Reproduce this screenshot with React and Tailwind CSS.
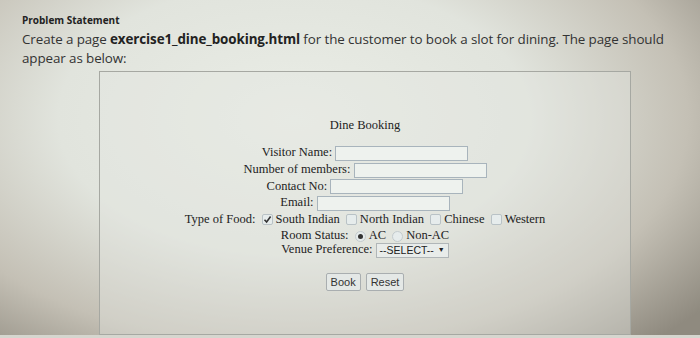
import React from 'react';

const serif = { fontFamily: '"Liberation Serif", "Times New Roman", serif' };

const TextBox = ({ w = 'w-[133px]' }) => (
  <span className={`inline-block ${w} h-[15px] border border-[#a8b4bc] bg-[#eef2ee] align-middle`} />
);

const Check = ({ checked }) => (
  <span className="inline-flex w-[11px] h-[11px] items-center justify-center border border-[#b9c2c6] bg-[#e6ecec] rounded-[2px] align-middle mx-[3px]">
    {checked && (
      <svg width="9" height="9" viewBox="0 0 9 9">
        <path d="M1.5 4.8 L3.6 7 L7.6 1.6" stroke="#333" strokeWidth="1.6" fill="none" />
      </svg>
    )}
  </span>
);

const Radio = ({ checked }) => (
  <span className="inline-flex w-[11px] h-[11px] items-center justify-center rounded-full border border-[#c3cbce] bg-[#e6ecec] align-middle mx-[3px]">
    {checked && <span className="w-[5px] h-[5px] rounded-full bg-[#333]" />}
  </span>
);

const Btn = ({ children }) => (
  <span
    className="inline-flex items-center h-[18px] px-[4px] border border-[#a9aeb0] bg-[#e4e8e6] rounded-[2px] text-[11px] text-[#333]"
    style={{ fontFamily: '"Liberation Sans", Arial, sans-serif' }}
  >
    {children}
  </span>
);

export default function App() {
  return (
    <div className="w-[700px] h-[338px] overflow-hidden relative bg-[radial-gradient(ellipse_75%_90%_at_42%_35%,#eaede6_0%,#e1e4dd_45%,#c4c0b5_75%,#8f8a7f_100%)]">
      <div className="pt-[14px] pl-[22px] pr-[16px]" style={{ fontFamily: '"Open Sans", "Noto Sans", sans-serif' }}>
        <div className="text-[10px] font-bold text-[#222] leading-[12px]">Problem Statement</div>
        <p className="mt-[4px] text-[13.4px] leading-[19px] text-[#333] tracking-[-0.1px]">
          Create a page <b className="text-[#222] leading-[19px]">exercise1_dine_booking.html</b> for the customer to book a slot for dining. The page should appear as below:
        </p>
      </div>
      <div className="mt-[3px] ml-[99px] w-[532px] h-[264px] border border-[#a6a8a2] bg-[#e3e7e1]/40 text-center text-[12.5px] text-[#222] leading-[16.3px] pt-[45px]" style={serif}>
        <div className="mb-[11px]">Dine Booking</div>
        <div>Visitor Name: <TextBox /></div>
        <div>Number of members: <TextBox /></div>
        <div>Contact No: <TextBox /></div>
        <div>Email: <TextBox /></div>
        <div>
          Type of Food: <Check checked />South Indian <Check />North Indian <Check />Chinese <Check />Western
        </div>
        <div>Room Status: <Radio checked />AC <Radio />Non-AC</div>
        <div className="-mt-[2px]">
          Venue Preference:{' '}
          <span
            className="inline-flex items-center h-[15px] px-[3px] border border-[#b0b6b8] bg-[#e8ecea] text-[10.5px] align-middle gap-[4px]"
            style={{ fontFamily: '"Liberation Sans", Arial, sans-serif' }}
          >
            --SELECT-- <span className="text-[7px]">▼</span>
          </span>
        </div>
        <div className="mt-[15px] flex justify-center gap-[5px]">
          <Btn>Book</Btn>
          <Btn>Reset</Btn>
        </div>
      </div>
      <div className="absolute left-0 right-0 bottom-0 h-[3px] bg-[#d6d6cf]" />
    </div>
  );
}
